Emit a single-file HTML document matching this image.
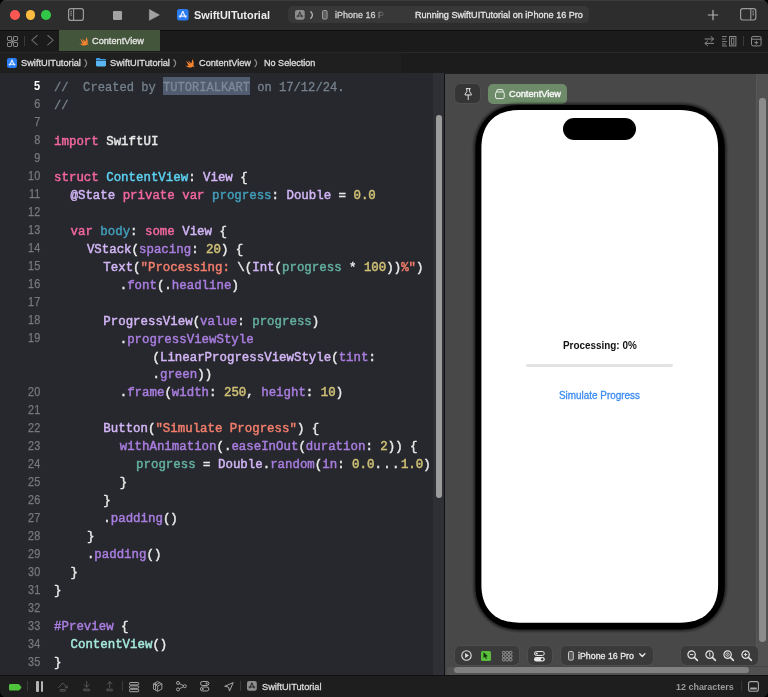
<!DOCTYPE html>
<html><head><meta charset="utf-8">
<style>
*{box-sizing:border-box;margin:0;padding:0}
html,body{width:768px;height:697px;overflow:hidden;background:#000}
body{position:relative;font-family:"Liberation Sans",sans-serif;}
#win{will-change:transform;position:absolute;left:0;top:0;width:768px;height:697px;background:#1f1f1f;border-radius:6px 6px 0 0;overflow:hidden}
#title{position:absolute;left:0;top:0;width:768px;height:30.5px;background:#2d2d2d;border-bottom:1.5px solid #0e0e0e;border-top:1px solid #3c3c3c}
#tabbar{position:absolute;left:0;top:30.5px;width:768px;height:21.5px;background:#1b1b1b}
#crumb{position:absolute;left:0;top:51.6px;width:768px;height:21.5px;background:linear-gradient(90deg,#1f1f20 0,#1f1f20 401px,#1c1c1c 401px);border-top:1.1px solid #282828}
#editor{position:absolute;left:0;top:73px;width:433px;height:602px;background:#27282d}
#gutter{position:absolute;left:433px;top:73px;width:11.2px;height:602px;background:#2f3035}
#canvas{position:absolute;left:444.1px;top:73.5px;width:323.9px;height:601.5px;background:#484848;border-left:1.2px solid #121212}
#status{position:absolute;left:0;top:675px;width:768px;height:22px;background:#1e1e1e;border-top:1px solid #111}
.dot{position:absolute;top:9.9px;width:9.7px;height:9.7px;border-radius:50%}
.abs{position:absolute}
svg{position:absolute;overflow:visible}
.cl,.ln{position:absolute;font-family:"Liberation Mono",monospace;font-size:12.41px;line-height:18px;height:18px;white-space:pre;font-weight:normal;-webkit-text-stroke:0.45px}
.ln{left:0;width:40.2px;text-align:right;color:#77787d;font-weight:normal;font-family:"Liberation Sans",sans-serif;font-size:12.2px;transform:scaleX(0.89);transform-origin:100% 50%;-webkit-text-stroke:0.25px}
.ln.cur{color:#fff;font-weight:bold;font-size:12.4px;-webkit-text-stroke:0}
.c,.csel{font-weight:normal;font-size:12.1px;-webkit-text-stroke:0.3px}
.c{color:#74808c}.csel{color:#7d8a98;background:#515c70;padding:4.2px 0 0}
.k{color:#f3679f}.w{color:#e8e8e8}.t{color:#5dd2f5}.y{color:#d3b6f7}.f{color:#a97de0}
.v{color:#63b09e}.d{color:#429ebb}.n{color:#d2c377}.s{color:#f47e6c}.m{color:#a6eadc}
.dots{letter-spacing:1.4px}
.ui{-webkit-text-stroke:0.3px;white-space:pre;position:absolute;transform-origin:0 50%}
.grp{position:absolute;background:#3a3a3a;border-radius:5px;box-shadow:0 0 0 0.5px #555}
</style></head><body>
<div id="win">
<div id="title"></div>
<div class="dot" style="left:10.2px;background:#fc5753"></div>
<div class="dot" style="left:25.7px;background:#fdbc40"></div>
<div class="dot" style="left:41.4px;background:#33c748"></div>
<svg style="left:67.5px;top:8px" width="16" height="13" viewBox="0 0 16 13"><rect x="0.6" y="0.6" width="14.8" height="11.8" rx="2.2" fill="none" stroke="#9c9c9c" stroke-width="1.2"/><path d="M5.6 0.6 V12.4" stroke="#9c9c9c" stroke-width="1.1"/><path d="M2.3 3.4 H4 M2.3 5.3 H4 M2.3 7.2 H4" stroke="#9c9c9c" stroke-width="0.9"/></svg>
<div class="abs" style="left:113.2px;top:10.5px;width:9.2px;height:9.2px;border-radius:1.2px;background:#a2a2a2"></div>
<svg style="left:149px;top:9px" width="11" height="12" viewBox="0 0 11 12"><path d="M0.4 0.5 L10.4 5.9 L0.4 11.3 Z" fill="#a2a2a2" stroke="#a2a2a2" stroke-width="0.6" stroke-linejoin="round"/></svg>
<svg style="left:176.5px;top:8.7px" width="11.6" height="11.6" viewBox="0 0 12 12"><rect x="0" y="0" width="12" height="12" rx="2.6" fill="#2b7cf2"/><g fill="none" stroke="#eaf2ff" stroke-width="1.25" stroke-linecap="round"><path d="M6 2.6 L3.2 8.6"/><path d="M6 2.6 L8.8 8.6"/><path d="M2.4 7.4 H9.6"/></g></svg>
<div class="abs" style="left:288.4px;top:6.4px;width:300.6px;height:17px;border-radius:5px;background:#383838"></div>
<svg style="left:295px;top:10px" width="9.7" height="9.7" viewBox="0 0 12 12"><rect x="0" y="0" width="12" height="12" rx="2.6" fill="#8e8e8e"/><g fill="none" stroke="#3a3a3a" stroke-width="1.25" stroke-linecap="round"><path d="M6 2.6 L3.2 8.6"/><path d="M6 2.6 L8.8 8.6"/><path d="M2.4 7.4 H9.6"/></g></svg>
<svg style="left:310px;top:11px" width="4.2" height="8" viewBox="0 0 4.2 8"><path d="M0.8 0.7 C2.9 2.6 2.9 5.4 0.8 7.3" fill="none" stroke="#c0c0c0" stroke-width="1.2" stroke-linecap="round"/></svg>
<svg style="left:322.3px;top:10.2px" width="5.6" height="9.6" viewBox="0 0 5.6 9.6"><rect x="0.5" y="0.5" width="4.6" height="8.6" rx="1.2" fill="#5e5e5e" stroke="#9c9c9c" stroke-width="1"/></svg>
<div class="abs" style="left:372px;top:7px;width:40px;height:16px;background:linear-gradient(90deg,rgba(56,56,56,0),rgba(56,56,56,0.75) 15%,#383838 30%)"></div>
<svg style="left:707.6px;top:10px" width="10" height="10" viewBox="0 0 10 10"><path d="M5 0.3 V9.7 M0.3 5 H9.7" stroke="#b4b4b4" stroke-width="1.2" stroke-linecap="round"/></svg>
<svg style="left:740px;top:8.3px" width="16.4" height="12.6" viewBox="0 0 16.4 12.6"><rect x="0.6" y="0.6" width="15.2" height="11.4" rx="2.2" fill="none" stroke="#9c9c9c" stroke-width="1.2"/><path d="M10.8 0.6 V12" stroke="#9c9c9c" stroke-width="1.1"/><path d="M12.4 3.2 H14 M12.4 5 H14 M12.4 6.8 H14" stroke="#9c9c9c" stroke-width="0.9"/></svg>
<div id="tabbar"></div>
<div class="abs" style="left:59.4px;top:30.3px;width:100.3px;height:21.2px;background:#43553a"></div>
<div id="crumb"></div>
<svg style="left:7px;top:35.6px" width="11" height="11" viewBox="0 0 11 11"><g fill="none" stroke="#8c8c8c" stroke-width="1"><rect x="0.5" y="0.5" width="4" height="4" rx="0.6"/><rect x="6.5" y="0.5" width="4" height="4" rx="0.6"/><rect x="0.5" y="6.5" width="4" height="4" rx="0.6"/><rect x="6.5" y="6.5" width="4" height="4" rx="0.6"/></g><path d="M3.6 5.5 H7.4 M5.5 3.6 V7.4" stroke="#8c8c8c" stroke-width="0.9"/></svg>
<div class="abs" style="left:24.4px;top:36px;width:1px;height:10px;background:#3a3a3a"></div>
<svg style="left:31px;top:35.1px" width="7" height="10.4" viewBox="0 0 7 10.4"><path d="M6.2 0.5 L0.8 5.2 L6.2 9.9" fill="none" stroke="#6a6a6a" stroke-width="1.1" stroke-linecap="round" stroke-linejoin="round"/></svg>
<svg style="left:46.8px;top:35.1px" width="7" height="10.4" viewBox="0 0 7 10.4"><path d="M0.8 0.5 L6.2 5.2 L0.8 9.9" fill="none" stroke="#6a6a6a" stroke-width="1.1" stroke-linecap="round" stroke-linejoin="round"/></svg>
<svg style="left:78.6px;top:37px" width="9.5" height="8.8" viewBox="0 0 9.5 8.8"><path fill="#f5822f" d="M7.0 0 C8.7 1.9 9.1 4.3 8.4 6.2 C9.2 7 9.5 7.8 9.4 8.4 C8.8 7.6 8.2 7.5 7.6 7.7 C6.4 8.6 4.6 8.8 3 8.2 C1.8 7.7 0.8 7 0 6.2 C1.2 6.7 2.6 6.9 3.8 6.6 C2.6 5.4 1.8 3.6 1.3 1.6 C2.6 3.2 4.2 4.6 5.6 5.3 C4.6 4.2 3.6 2.8 3 1.6 C4.2 2.8 5.6 3.8 6.6 4.3 C6.9 2.8 7.1 1.4 7.0 0 Z"/></svg>
<svg style="left:703.6px;top:36px" width="10.6" height="10.4" viewBox="0 0 10.6 10.4"><g fill="none" stroke="#8c8c8c" stroke-width="1" stroke-linecap="round" stroke-linejoin="round"><path d="M1 3 H9.6 M7 0.6 L9.6 3 L7 5.4"/><path d="M9.6 7.4 H1 M3.6 5 L1 7.4 L3.6 9.8"/></g></svg>
<svg style="left:721.6px;top:36px" width="14.4" height="10.4" viewBox="0 0 14.4 10.4"><path d="M0 0.6 H5 M0 3.1 H3.8 M0 5.6 H5 M0 8 H3.8 M0 10 H5" stroke="#8c8c8c" stroke-width="0.9"/><rect x="7.6" y="0.5" width="6.3" height="9.4" fill="none" stroke="#8c8c8c" stroke-width="1"/><rect x="9.6" y="2.2" width="2.3" height="6" fill="none" stroke="#8c8c8c" stroke-width="0.9"/></svg>
<div class="abs" style="left:743px;top:36px;width:1px;height:9.5px;background:#3a3a3a"></div>
<svg style="left:750.6px;top:36px" width="10.6" height="10.4" viewBox="0 0 10.6 10.4"><rect x="0.5" y="0.5" width="9.6" height="9.4" rx="1.6" fill="none" stroke="#8c8c8c" stroke-width="1"/><path d="M0.5 3.2 H10.1" stroke="#8c8c8c" stroke-width="1"/><path d="M3.4 6.6 H7.2 M5.3 4.8 V8.4" stroke="#8c8c8c" stroke-width="1"/></svg>
<svg style="left:7.3px;top:57.8px" width="10" height="10" viewBox="0 0 12 12"><rect x="0" y="0" width="12" height="12" rx="2.6" fill="#2b7cf2"/><g fill="none" stroke="#eaf2ff" stroke-width="1.25" stroke-linecap="round"><path d="M6 2.6 L3.2 8.6"/><path d="M6 2.6 L8.8 8.6"/><path d="M2.4 7.4 H9.6"/></g></svg>
<svg style="left:83.8px;top:59px" width="4.4" height="8.6" viewBox="0 0 4.4 8.6"><path d="M0.9 0.7 C3.2 2.7 3.2 5.9 0.9 7.9" fill="none" stroke="#8a8a8a" stroke-width="1.25" stroke-linecap="round"/></svg>
<svg style="left:172.8px;top:59px" width="4.4" height="8.6" viewBox="0 0 4.4 8.6"><path d="M0.9 0.7 C3.2 2.7 3.2 5.9 0.9 7.9" fill="none" stroke="#8a8a8a" stroke-width="1.25" stroke-linecap="round"/></svg>
<svg style="left:253.8px;top:59px" width="4.4" height="8.6" viewBox="0 0 4.4 8.6"><path d="M0.9 0.7 C3.2 2.7 3.2 5.9 0.9 7.9" fill="none" stroke="#8a8a8a" stroke-width="1.25" stroke-linecap="round"/></svg>
<svg style="left:95.6px;top:58.4px" width="10" height="8.4" viewBox="0 0 10 8.4"><path d="M0 1.2 C0 0.5 0.5 0 1.2 0 H3.6 L4.6 1.1 H8.8 C9.5 1.1 10 1.6 10 2.3 V2.6 H0 Z" fill="#3d9ee6"/><path d="M0 3 H10 V7.2 C10 7.9 9.5 8.4 8.8 8.4 H1.2 C0.5 8.4 0 7.9 0 7.2 Z" fill="#5ab6f2"/></svg>
<svg style="left:185px;top:58.6px" width="9.5" height="8.8" viewBox="0 0 9.5 8.8"><path fill="#f5822f" d="M7.0 0 C8.7 1.9 9.1 4.3 8.4 6.2 C9.2 7 9.5 7.8 9.4 8.4 C8.8 7.6 8.2 7.5 7.6 7.7 C6.4 8.6 4.6 8.8 3 8.2 C1.8 7.7 0.8 7 0 6.2 C1.2 6.7 2.6 6.9 3.8 6.6 C2.6 5.4 1.8 3.6 1.3 1.6 C2.6 3.2 4.2 4.6 5.6 5.3 C4.6 4.2 3.6 2.8 3 1.6 C4.2 2.8 5.6 3.8 6.6 4.3 C6.9 2.8 7.1 1.4 7.0 0 Z"/></svg>
<div id="editor"></div>
<div id="gutter"></div>
<div class="abs" style="left:436px;top:114.5px;width:5.8px;height:383px;border-radius:3px;background:#9c9c9c"></div>
<div class="ln cur" style="top:77.10px">5</div>
<div class="cl" style="top:79.10px;left:54.10px"><span class="c">//  Created by </span><span class="csel">TUTORIALKART</span><span class="c"> on 17/12/24.</span></div>
<div class="ln" style="top:95.10px">6</div>
<div class="cl" style="top:97.06px;left:54.10px"><span class="c">//</span></div>
<div class="ln" style="top:113.10px">7</div>
<div class="ln" style="top:131.10px">8</div>
<div class="cl" style="top:132.98px;left:54.10px"><span class="k">import</span><span class="w"> SwiftUI</span></div>
<div class="ln" style="top:149.10px">9</div>
<div class="ln" style="top:167.10px">10</div>
<div class="cl" style="top:168.90px;left:54.10px"><span class="k">struct</span><span class="w"> </span><span class="t">ContentView</span><span class="w">: </span><span class="y">View</span><span class="w"> {</span></div>
<div class="ln" style="top:185.10px">11</div>
<div class="cl" style="top:186.86px;left:70.50px"><span class="y">@State</span><span class="w"> </span><span class="k">private</span><span class="w"> </span><span class="k">var</span><span class="w"> </span><span class="d">progress</span><span class="w">: </span><span class="y">Double</span><span class="w"> = </span><span class="n">0.0</span></div>
<div class="ln" style="top:203.10px">12</div>
<div class="ln" style="top:221.10px">13</div>
<div class="cl" style="top:222.78px;left:70.50px"><span class="k">var</span><span class="w"> </span><span class="d">body</span><span class="w">: </span><span class="k">some</span><span class="w"> </span><span class="y">View</span><span class="w"> {</span></div>
<div class="ln" style="top:239.10px">14</div>
<div class="cl" style="top:240.74px;left:86.90px"><span class="y">VStack</span><span class="w">(</span><span class="f">spacing</span><span class="w">: </span><span class="n">20</span><span class="w">) {</span></div>
<div class="ln" style="top:257.10px">15</div>
<div class="cl" style="top:258.70px;left:103.30px"><span class="y">Text</span><span class="w">(</span><span class="s">&quot;Processing: </span><span class="w">\(</span><span class="y">Int</span><span class="w">(</span><span class="v">progress</span><span class="w"> * </span><span class="n">100</span><span class="w">))</span><span class="s">%&quot;</span><span class="w">)</span></div>
<div class="ln" style="top:275.10px">16</div>
<div class="cl" style="top:276.66px;left:119.70px"><span class="w">.</span><span class="f">font</span><span class="w">(.</span><span class="f">headline</span><span class="w">)</span></div>
<div class="ln" style="top:293.10px">17</div>
<div class="ln" style="top:311.10px">18</div>
<div class="cl" style="top:312.58px;left:103.30px"><span class="y">ProgressView</span><span class="w">(</span><span class="f">value</span><span class="w">: </span><span class="v">progress</span><span class="w">)</span></div>
<div class="ln" style="top:329.10px">19</div>
<div class="cl" style="top:330.54px;left:119.70px"><span class="w">.</span><span class="f">progressViewStyle</span></div>
<div class="cl" style="top:348.50px;left:152.50px"><span class="w">(</span><span class="y">LinearProgressViewStyle</span><span class="w">(</span><span class="f">tint</span><span class="w">:</span></div>
<div class="cl" style="top:366.46px;left:152.50px"><span class="w">.</span><span class="f">green</span><span class="w">))</span></div>
<div class="ln" style="top:383.10px">20</div>
<div class="cl" style="top:384.42px;left:119.70px"><span class="w">.</span><span class="f">frame</span><span class="w">(</span><span class="f">width</span><span class="w">: </span><span class="n">250</span><span class="w">, </span><span class="f">height</span><span class="w">: </span><span class="n">10</span><span class="w">)</span></div>
<div class="ln" style="top:401.10px">21</div>
<div class="ln" style="top:419.10px">22</div>
<div class="cl" style="top:420.34px;left:103.30px"><span class="y">Button</span><span class="w">(</span><span class="s">&quot;Simulate Progress&quot;</span><span class="w">) {</span></div>
<div class="ln" style="top:437.10px">23</div>
<div class="cl" style="top:438.30px;left:119.70px"><span class="f">withAnimation</span><span class="w">(.</span><span class="f">easeInOut</span><span class="w">(</span><span class="f">duration</span><span class="w">: </span><span class="n">2</span><span class="w">)) {</span></div>
<div class="ln" style="top:455.10px">24</div>
<div class="cl" style="top:456.26px;left:136.10px"><span class="v">progress</span><span class="w"> = </span><span class="y">Double</span><span class="w">.</span><span class="f">random</span><span class="w">(</span><span class="f">in</span><span class="w">: </span><span class="n">0.0</span><span class="w dots">...</span><span class="n">1.0</span><span class="w">)</span></div>
<div class="ln" style="top:473.10px">25</div>
<div class="cl" style="top:474.22px;left:119.70px"><span class="w">}</span></div>
<div class="ln" style="top:491.10px">26</div>
<div class="cl" style="top:492.18px;left:103.30px"><span class="w">}</span></div>
<div class="ln" style="top:509.10px">27</div>
<div class="cl" style="top:510.14px;left:103.30px"><span class="w">.</span><span class="f">padding</span><span class="w">()</span></div>
<div class="ln" style="top:527.10px">28</div>
<div class="cl" style="top:528.10px;left:86.90px"><span class="w">}</span></div>
<div class="ln" style="top:545.10px">29</div>
<div class="cl" style="top:546.06px;left:86.90px"><span class="w">.</span><span class="f">padding</span><span class="w">()</span></div>
<div class="ln" style="top:563.10px">30</div>
<div class="cl" style="top:564.02px;left:70.50px"><span class="w">}</span></div>
<div class="ln" style="top:581.10px">31</div>
<div class="cl" style="top:581.98px;left:54.10px"><span class="w">}</span></div>
<div class="ln" style="top:599.10px">32</div>
<div class="ln" style="top:617.10px">33</div>
<div class="cl" style="top:617.90px;left:54.10px"><span class="f">#Preview</span><span class="w"> {</span></div>
<div class="ln" style="top:635.10px">34</div>
<div class="cl" style="top:635.86px;left:70.50px"><span class="m">ContentView</span><span class="w">()</span></div>
<div class="ln" style="top:653.10px">35</div>
<div class="cl" style="top:653.82px;left:54.10px"><span class="w">}</span></div>
<div id="canvas"></div>
<div class="abs" style="left:756px;top:74px;width:12px;height:601px;background:#515151;border-left:1px solid #575757"></div>
<div class="abs" style="left:759.2px;top:98px;width:6.7px;height:543.8px;border-radius:3.4px;background:#8c8c8c"></div>
<div class="abs" style="left:446.5px;top:665.6px;width:321.5px;height:9.4px;background:#515151;border-top:1px solid #464646"></div>
<div class="abs" style="left:454.4px;top:666.9px;width:294.6px;height:6px;border-radius:3px;background:#808080"></div>
<div class="grp" style="left:455.2px;top:84.2px;width:25px;height:19.2px;background:#353535"></div>
<svg style="left:463.6px;top:87.6px" width="8.4" height="12.6" viewBox="0 0 8.4 12.6"><g fill="none" stroke="#e0e0e0" stroke-width="1" stroke-linejoin="round" stroke-linecap="round"><path d="M2.3 0.6 H6.1 M2.8 0.6 V3.6 L1 6.3 V7 H7.4 V6.3 L5.6 3.6 V0.6"/><path d="M4.2 7 V11.6"/></g></svg>
<div class="abs" style="left:488.1px;top:84px;width:79.3px;height:19.8px;border-radius:5px;background:#6d8b69"></div>
<svg style="left:494.6px;top:88.6px" width="9.8" height="10.2" viewBox="0 0 9.8 10.2"><g fill="none" stroke="#eef4ec" stroke-width="1" stroke-linejoin="round"><rect x="0.6" y="3" width="8.6" height="6.6" rx="1.4"/><path d="M1.8 3 V1.6 C1.8 1 2.2 0.6 2.8 0.6 H7 C7.6 0.6 8 1 8 1.6 V3"/></g></svg>
<svg style="left:0;top:0" width="768" height="697" viewBox="0 0 768 697"><defs><filter id="bl" x="-5%" y="-5%" width="110%" height="110%"><feGaussianBlur stdDeviation="1.1"/></filter></defs><path d="M519.4 104.9 H680.8 C706.9359999999999 104.9 724.8 122.76400000000001 724.8 148.9 V585.5 C724.8 611.636 706.9359999999999 629.5 680.8 629.5 H519.4 C493.26399999999995 629.5 475.4 611.636 475.4 585.5 V148.9 C475.4 122.76400000000001 493.26399999999995 104.9 519.4 104.9 Z" fill="none" stroke="#000" stroke-opacity="0.5" stroke-width="4" filter="url(#bl)"/><path d="M519.4 104.9 H680.8 C706.9359999999999 104.9 724.8 122.76400000000001 724.8 148.9 V585.5 C724.8 611.636 706.9359999999999 629.5 680.8 629.5 H519.4 C493.26399999999995 629.5 475.4 611.636 475.4 585.5 V148.9 C475.4 122.76400000000001 493.26399999999995 104.9 519.4 104.9 Z" fill="#000"/><path d="M519.4 110.1 H680.1 C704.4200000000001 110.1 718.1 123.78 718.1 148.1 V584.7 C718.1 609.0200000000001 704.4200000000001 622.7 680.1 622.7 H519.4 C495.08 622.7 481.4 609.0200000000001 481.4 584.7 V148.1 C481.4 123.78 495.08 110.1 519.4 110.1 Z" fill="#fff"/></svg>
<div class="abs" style="left:562.8px;top:117.9px;width:73.6px;height:22.6px;border-radius:11.3px;background:#000"></div>
<div class="abs" style="left:526px;top:364.1px;width:147px;height:2.7px;border-radius:1.4px;background:#e3e3e3"></div>
<div class="grp" style="left:455px;top:645.6px;width:64px;height:19.2px"></div>
<svg style="left:461.2px;top:650.2px" width="11" height="11" viewBox="0 0 11 11"><circle cx="5.5" cy="5.5" r="4.7" fill="none" stroke="#e0e0e0" stroke-width="1.1"/><path d="M4.1 3.1 L8 5.5 L4.1 7.9 Z" fill="#e0e0e0"/></svg>
<div class="abs" style="left:480.6px;top:650.6px;width:10.4px;height:10.2px;border-radius:1.6px;background:#58be3c"></div>
<svg style="left:483.4px;top:652.2px" width="5.4" height="7.4" viewBox="0 0 5.4 7.4"><path d="M0.5 0.3 L0.5 6 L2 4.7 L3 7 L3.9 6.6 L2.9 4.4 L4.9 4.3 Z" fill="#14300c"/></svg>
<svg style="left:501.8px;top:650.6px" width="10.4" height="10.4" viewBox="0 0 10.4 10.4"><rect x="0.4" y="0.4" width="2.6" height="2.6" rx="0.8" fill="none" stroke="#a8a8a8" stroke-width="0.8"/><rect x="0.4" y="3.9" width="2.6" height="2.6" rx="0.8" fill="none" stroke="#a8a8a8" stroke-width="0.8"/><rect x="0.4" y="7.4" width="2.6" height="2.6" rx="0.8" fill="none" stroke="#a8a8a8" stroke-width="0.8"/><rect x="3.9" y="0.4" width="2.6" height="2.6" rx="0.8" fill="none" stroke="#a8a8a8" stroke-width="0.8"/><rect x="3.9" y="3.9" width="2.6" height="2.6" rx="0.8" fill="none" stroke="#a8a8a8" stroke-width="0.8"/><rect x="3.9" y="7.4" width="2.6" height="2.6" rx="0.8" fill="none" stroke="#a8a8a8" stroke-width="0.8"/><rect x="7.4" y="0.4" width="2.6" height="2.6" rx="0.8" fill="none" stroke="#a8a8a8" stroke-width="0.8"/><rect x="7.4" y="3.9" width="2.6" height="2.6" rx="0.8" fill="none" stroke="#a8a8a8" stroke-width="0.8"/><rect x="7.4" y="7.4" width="2.6" height="2.6" rx="0.8" fill="none" stroke="#a8a8a8" stroke-width="0.8"/></svg>
<div class="grp" style="left:527.5px;top:645.6px;width:24.4px;height:19.2px"></div>
<svg style="left:534px;top:651px" width="10.8" height="10.6" viewBox="0 0 10.8 10.6"><rect x="0.5" y="0.5" width="9.8" height="4" rx="2" fill="none" stroke="#e8e8e8" stroke-width="1"/><circle cx="2.7" cy="2.5" r="1.1" fill="#e8e8e8"/><rect x="0" y="6" width="10.8" height="4.6" rx="2.3" fill="#e8e8e8"/><circle cx="8.2" cy="8.3" r="1.2" fill="#3a3a3a"/></svg>
<div class="grp" style="left:560.6px;top:645.6px;width:92px;height:19.2px"></div>
<svg style="left:568px;top:651.2px" width="5.8" height="9.6" viewBox="0 0 5.8 9.6"><rect x="0.5" y="0.5" width="4.8" height="8.6" rx="1.2" fill="#5a5a5a" stroke="#c8c8c8" stroke-width="1"/></svg>
<svg style="left:639.2px;top:653.4px" width="6.6" height="4.6" viewBox="0 0 6.6 4.6"><path d="M0.7 0.7 L3.3 3.5 L5.9 0.7" fill="none" stroke="#e8e8e8" stroke-width="1.3" stroke-linecap="round" stroke-linejoin="round"/></svg>
<div class="grp" style="left:680.7px;top:645.6px;width:77.6px;height:19.2px"></div>
<svg style="left:686.5px;top:650.4px" width="11.4" height="11.4" viewBox="0 0 11.4 11.4"><circle cx="4.6" cy="4.6" r="3.7" fill="none" stroke="#e4e4e4" stroke-width="1.2"/><path d="M7.4 7.4 L10.4 10.4" stroke="#e4e4e4" stroke-width="1.5" stroke-linecap="round"/><path d="M2.9 4.6 H6.3" stroke="#e4e4e4" stroke-width="1"/></svg>
<svg style="left:704.8000000000001px;top:650.4px" width="11.4" height="11.4" viewBox="0 0 11.4 11.4"><circle cx="4.6" cy="4.6" r="3.7" fill="none" stroke="#e4e4e4" stroke-width="1.2"/><path d="M7.4 7.4 L10.4 10.4" stroke="#e4e4e4" stroke-width="1.5" stroke-linecap="round"/><path d="M4 3.4 L4.8 2.8 V6.5" fill="none" stroke="#e4e4e4" stroke-width="0.9"/></svg>
<svg style="left:722.5px;top:650.4px" width="11.4" height="11.4" viewBox="0 0 11.4 11.4"><circle cx="4.6" cy="4.6" r="3.7" fill="none" stroke="#e4e4e4" stroke-width="1.2"/><path d="M7.4 7.4 L10.4 10.4" stroke="#e4e4e4" stroke-width="1.5" stroke-linecap="round"/><circle cx="4.6" cy="4.6" r="1.7" fill="none" stroke="#e4e4e4" stroke-width="0.8"/><path d="M4.6 3.8 V5.4" stroke="#e4e4e4" stroke-width="0.7"/></svg>
<svg style="left:740.6px;top:650.4px" width="11.4" height="11.4" viewBox="0 0 11.4 11.4"><circle cx="4.6" cy="4.6" r="3.7" fill="none" stroke="#e4e4e4" stroke-width="1.2"/><path d="M7.4 7.4 L10.4 10.4" stroke="#e4e4e4" stroke-width="1.5" stroke-linecap="round"/><path d="M2.9 4.6 H6.3 M4.6 2.9 V6.3" stroke="#e4e4e4" stroke-width="1"/></svg>
<div id="status"></div>
<svg style="left:8.9px;top:683.6px" width="12.4" height="6.6" viewBox="0 0 12.4 6.6"><path d="M1.4 0 H9.2 C9.8 0 10.2 0.2 10.6 0.7 L12.2 2.7 C12.5 3.1 12.5 3.5 12.2 3.9 L10.6 5.9 C10.2 6.4 9.8 6.6 9.2 6.6 H1.4 C0.6 6.6 0 6 0 5.2 V1.4 C0 0.6 0.6 0 1.4 0 Z" fill="#4fc33b"/></svg>
<div class="abs" style="left:26.6px;top:681px;width:1px;height:10px;background:#3a3a3a"></div>
<div class="abs" style="left:36.4px;top:680.6px;width:2.3px;height:11.6px;border-radius:1px;background:#b4b4b4"></div>
<div class="abs" style="left:41px;top:680.6px;width:2.3px;height:11.6px;border-radius:1px;background:#b4b4b4"></div>
<svg style="left:58px;top:681.6px" width="10.4" height="10" viewBox="0 0 10.4 10"><g fill="none" stroke="#555" stroke-width="1" stroke-linejoin="round" stroke-linecap="round"><path d="M0.6 5.6 L4.8 1 L9 5.6"/><path d="M7.2 5.8 H9.2 V3.8"/><rect x="2.2" y="7.6" width="5.4" height="1.6" rx="0.6"/></g></svg>
<svg style="left:83px;top:681px" width="7.4" height="10.6" viewBox="0 0 7.4 10.6"><g fill="none" stroke="#555" stroke-width="1" stroke-linejoin="round" stroke-linecap="round"><path d="M3.7 0.5 V6 M1.4 3.8 L3.7 6.2 L6 3.8"/><rect x="0.6" y="8.2" width="6.2" height="1.6" rx="0.6"/></g></svg>
<svg style="left:106.4px;top:681px" width="7.4" height="10.6" viewBox="0 0 7.4 10.6"><g fill="none" stroke="#555" stroke-width="1" stroke-linejoin="round" stroke-linecap="round"><path d="M3.7 6.4 V0.8 M1.4 3 L3.7 0.6 L6 3"/><rect x="0.6" y="8.2" width="6.2" height="1.6" rx="0.6"/></g></svg>
<div class="abs" style="left:121.6px;top:681px;width:1px;height:10px;background:#3a3a3a"></div>
<svg style="left:129.4px;top:681.6px" width="10.2" height="10.2" viewBox="0 0 10.2 10.2"><rect x="0.5" y="0.5" width="9.2" height="2.4" rx="0.8" fill="none" stroke="#a8a8a8" stroke-width="1"/><rect x="0.5" y="3.9" width="9.2" height="2.4" rx="0.8" fill="none" stroke="#a8a8a8" stroke-width="1"/><rect x="0.5" y="7.3" width="9.2" height="2.4" rx="0.8" fill="none" stroke="#a8a8a8" stroke-width="1"/></svg>
<svg style="left:153.2px;top:681.2px" width="9.4" height="10.8" viewBox="0 0 9.4 10.8"><g fill="none" stroke="#a8a8a8" stroke-width="0.9" stroke-linejoin="round"><path d="M4.7 0.5 L8.9 2.8 V8 L4.7 10.3 L0.5 8 V2.8 Z"/><path d="M0.5 2.8 L4.7 5.2 L8.9 2.8 M4.7 5.2 V10.3"/><path d="M2.6 1.7 V9.1 M2.6 4 L6.8 1.7"/></g></svg>
<svg style="left:176px;top:681.4px" width="10.8" height="10.4" viewBox="0 0 10.8 10.4"><g fill="none" stroke="#a8a8a8" stroke-width="0.95"><circle cx="2" cy="2" r="1.5"/><circle cx="2" cy="8.4" r="1.5"/><circle cx="8.8" cy="5.2" r="1.5"/><path d="M3.4 2.6 L7.4 4.6 M3.4 7.8 L7.4 5.8"/></g></svg>
<svg style="left:200.2px;top:681.4px" width="9.4" height="10.6" viewBox="0 0 9.4 10.6"><g fill="none" stroke="#a8a8a8" stroke-width="1"><rect x="0.5" y="0.5" width="8.4" height="4" rx="2"/><rect x="0.5" y="6" width="8.4" height="4" rx="2"/></g><circle cx="6.6" cy="2.5" r="1" fill="#a8a8a8"/><circle cx="2.8" cy="8" r="1" fill="#a8a8a8"/></svg>
<svg style="left:223.8px;top:681.6px" width="9.8" height="9.8" viewBox="0 0 9.8 9.8"><path d="M9.2 0.6 L0.7 4.3 L4.6 5.2 L5.5 9.1 Z" fill="none" stroke="#a8a8a8" stroke-width="1" stroke-linejoin="round"/></svg>
<div class="abs" style="left:240px;top:681px;width:1px;height:10px;background:#3a3a3a"></div>
<svg style="left:247.3px;top:681.2px" width="9.8" height="9.8" viewBox="0 0 12 12"><rect x="0" y="0" width="12" height="12" rx="2.6" fill="#8e8e8e"/><g fill="none" stroke="#2a2a2a" stroke-width="1.25" stroke-linecap="round"><path d="M6 2.6 L3.2 8.6"/><path d="M6 2.6 L8.8 8.6"/><path d="M2.4 7.4 H9.6"/></g></svg>
<div class="abs" style="left:740.6px;top:681.4px;width:1px;height:9.4px;background:#333"></div>
<svg style="left:0px;top:691px" width="768" height="6" viewBox="0 0 768 6"><path d="M0 1.2 Q0.6 4.2 3.8 6 L0 6 Z" fill="#000"/><path d="M768 1.2 Q767.4 4.2 764.2 6 L768 6 Z" fill="#000"/></svg>
<svg style="left:748px;top:681.2px" width="11" height="10.8" viewBox="0 0 11 10.8"><rect x="0.6" y="0.6" width="9.8" height="9.6" rx="2" fill="none" stroke="#a8a8a8" stroke-width="1.1"/><rect x="2.2" y="6.4" width="6.6" height="2.2" rx="0.7" fill="#a8a8a8"/></svg>
<div class="ui" style="left:194.00px;top:8.00px;height:14px;line-height:14px;font-size:11.27px;font-weight:bold;color:#ececec;transform:scaleX(0.9660);-webkit-text-stroke:0;">SwiftUITutorial</div>
<div class="ui" style="left:334.60px;top:8.00px;height:14px;line-height:14px;font-size:9.31px;font-weight:normal;color:#d0d0d0;transform:scaleX(0.9659);-webkit-mask-image:linear-gradient(90deg,#000 84%,rgba(0,0,0,0.4) 90%,rgba(0,0,0,0.15) 100%);mask-image:linear-gradient(90deg,#000 84%,rgba(0,0,0,0.4) 90%,rgba(0,0,0,0.15) 100%);">iPhone 16 P</div>
<div class="ui" style="left:415.00px;top:8.00px;height:14px;line-height:14px;font-size:9.41px;font-weight:normal;color:#e4e4e4;transform:scaleX(0.9664);">Running SwiftUITutorial on iPhone 16 Pro</div>
<div class="ui" style="left:91.70px;top:34.20px;height:14px;line-height:14px;font-size:9.52px;font-weight:normal;color:#e6e6e6;transform:scaleX(0.9664);">ContentView</div>
<div class="ui" style="left:21.40px;top:56.00px;height:14px;line-height:14px;font-size:9.61px;font-weight:normal;color:#dedede;transform:scaleX(0.9658);">SwiftUITutorial</div>
<div class="ui" style="left:109.90px;top:56.00px;height:14px;line-height:14px;font-size:9.61px;font-weight:normal;color:#dedede;transform:scaleX(0.9658);">SwiftUITutorial</div>
<div class="ui" style="left:198.50px;top:56.00px;height:14px;line-height:14px;font-size:9.52px;font-weight:normal;color:#dedede;transform:scaleX(0.9664);">ContentView</div>
<div class="ui" style="left:263.75px;top:56.00px;height:14px;line-height:14px;font-size:9.4px;font-weight:normal;color:#dedede;transform:scaleX(0.9663);">No Selection</div>
<div class="ui" style="left:508.75px;top:87.00px;height:14px;line-height:14px;font-size:9.52px;font-weight:normal;color:#f4f4f4;transform:scaleX(0.9664);-webkit-text-stroke:0.45px;">ContentView</div>
<div class="ui" style="left:562.70px;top:338.50px;height:14px;line-height:14px;font-size:10.26px;font-weight:bold;color:#111;transform:scaleX(0.9658);-webkit-text-stroke:0;">Processing: 0%</div>
<div class="ui" style="left:559.20px;top:388.50px;height:14px;line-height:14px;font-size:10.26px;font-weight:normal;color:#3a8bf0;transform:scaleX(0.9663);">Simulate Progress</div>
<div class="ui" style="left:578.40px;top:648.60px;height:14px;line-height:14px;font-size:9.14px;font-weight:normal;color:#e8e8e8;transform:scaleX(0.9667);">iPhone 16 Pro</div>
<div class="ui" style="left:261.90px;top:679.60px;height:14px;line-height:14px;font-size:9.54px;font-weight:normal;color:#dcdcdc;transform:scaleX(0.9664);">SwiftUITutorial</div>
<div class="ui" style="left:676.00px;top:680.30px;height:14px;line-height:14px;font-size:9.28px;font-weight:bold;color:#9a9a9a;transform:scaleX(0.9658);-webkit-text-stroke:0;">12 characters</div>
</div>
</body></html>
